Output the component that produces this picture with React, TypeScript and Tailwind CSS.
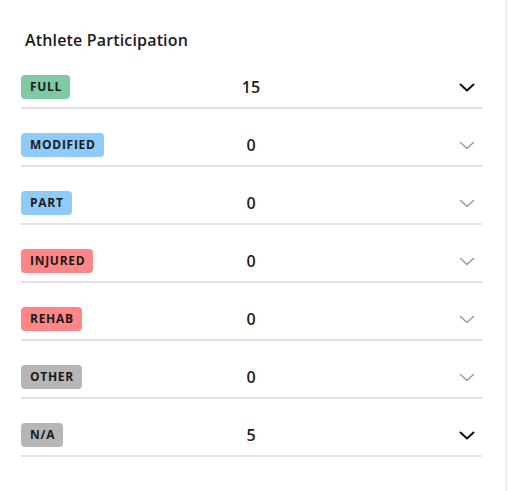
const rows = [
  { label: 'FULL', count: 15, color: 'bg-[#7fcaa4]' },
  { label: 'MODIFIED', count: 0, color: 'bg-[#8fcbfa]' },
  { label: 'PART', count: 0, color: 'bg-[#8fcbfa]' },
  { label: 'INJURED', count: 0, color: 'bg-[#ff8686]' },
  { label: 'REHAB', count: 0, color: 'bg-[#ff8686]' },
  { label: 'OTHER', count: 0, color: 'bg-[#b6b6b6]' },
  { label: 'N/A', count: 5, color: 'bg-[#b6b6b6]' },
];

function Chevron({ active }: { active: boolean }) {
  return (
    <svg width="16" height="9" viewBox="0 0 16 9" fill="none">
      <path
        d="M1.5 1.5 L8 7.5 L14.5 1.5"
        stroke={active ? '#111111' : '#9b9b9b'}
        strokeWidth={active ? 2 : 1.5}
        strokeLinecap="round"
        strokeLinejoin="round"
      />
    </svg>
  );
}

export default function App() {
  return (
    <div
      className="w-[507px] h-[491px] bg-white border-r-2 border-[#ececec]"
      style={{ fontFamily: '"Open Sans", "Noto Sans", sans-serif' }}
    >
      <div className="pl-[21px] w-[482px]">
        <h2 className="pt-[29px] pl-[4px] text-[16px] leading-[22px] font-semibold tracking-[0.01em] text-[#1c1c1c]">
          Athlete Participation
        </h2>
        {rows.map((row) => (
          <div
            key={row.label}
            className="flex items-center h-[58px] pt-[24px] pb-[8px] border-b-2 border-[#e2e2e2]"
          >
            <div className="w-[190px] flex">
              <span
                className={`flex items-center h-[24px] pl-[9px] pr-[8px] rounded-[4px] text-[12px] leading-none font-bold tracking-[0.06em] text-[#1a1a1a] ${row.color}`}
              >
                {row.label}
              </span>
            </div>
            <div className="w-[80px] text-center text-[16px] leading-none font-semibold text-[#1c1c1c]">
              {row.count}
            </div>
            <div className="flex-1 flex justify-end pr-[7px]">
              <Chevron active={row.count > 0} />
            </div>
          </div>
        ))}
      </div>
    </div>
  );
}
